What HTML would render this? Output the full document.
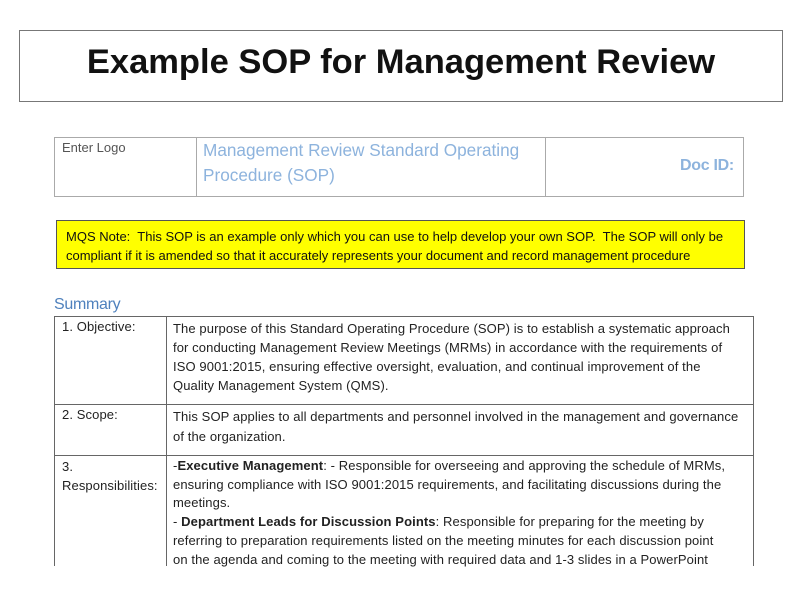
<!DOCTYPE html>
<html><head><meta charset="utf-8"><style>
body{margin:0;width:794px;height:600px;background:#fff;position:relative;overflow:hidden;font-family:"Liberation Sans",sans-serif;}
.a{position:absolute;white-space:nowrap;}
.t{font-size:13px;letter-spacing:0.1px;color:#222;}
.b{position:absolute;border:1px solid #999;}
.l{position:absolute;background:#666;}
</style></head><body>
<div class="b" style="left:19px;top:30px;width:762px;height:70px;border-color:#777"></div>
<div class="a" style="left:19px;width:764px;text-align:center;top:43px;font-size:34.5px;font-weight:bold;letter-spacing:0;color:#111">Example SOP for Management Review</div>

<div class="b" style="left:54px;top:137px;width:688px;height:58px;border-color:#aaa"></div>
<div class="l" style="left:196px;top:137px;width:1px;height:59px;background:#aaa"></div>
<div class="l" style="left:545px;top:137px;width:1px;height:59px;background:#aaa"></div>
<div class="a" style="left:62px;top:140px;font-size:13px;color:#555">Enter Logo</div>
<div class="a" style="left:203px;top:138px;font-size:17.2px;color:#8db3dd;line-height:25px">Management Review Standard Operating<br>Procedure (SOP)</div>
<div class="a" style="left:680px;top:157px;font-size:16px;font-weight:bold;letter-spacing:-0.3px;color:#8db3dd">Doc ID:</div>

<div class="a" style="left:56px;top:220px;width:687px;height:47px;background:#ffff00;border:1px solid #555"></div>
<div class="a t" style="left:66px;top:227px;line-height:19px;color:#111;font-size:13px;letter-spacing:0">MQS Note:&nbsp; This SOP is an example only which you can use to help develop your own SOP.&nbsp; The SOP will only be<br>compliant if it is amended so that it accurately represents your document and record management procedure</div>

<div class="a" style="left:54px;top:296px;font-size:16px;letter-spacing:-0.3px;color:#4f81bd">Summary</div>

<div class="l" style="left:54px;top:316px;width:700px;height:1px"></div>
<div class="l" style="left:54px;top:404px;width:700px;height:1px"></div>
<div class="l" style="left:54px;top:455px;width:700px;height:1px"></div>
<div class="l" style="left:54px;top:316px;width:1px;height:250px"></div>
<div class="l" style="left:166px;top:316px;width:1px;height:250px"></div>
<div class="l" style="left:753px;top:316px;width:1px;height:250px"></div>

<div class="a t" style="left:62px;top:319px">1. Objective:</div>
<div class="a t" style="left:173px;top:319px;line-height:19px">The purpose of this Standard Operating Procedure (SOP) is to establish a systematic approach<br>for conducting Management Review Meetings (MRMs) in accordance with the requirements of<br>ISO 9001:2015, ensuring effective oversight, evaluation, and continual improvement of the<br>Quality Management System (QMS).</div>

<div class="a t" style="left:62px;top:407px">2. Scope:</div>
<div class="a t" style="left:173px;top:407px;line-height:19.5px">This SOP applies to all departments and personnel involved in the management and governance<br>of the organization.</div>

<div class="a t" style="left:62px;top:457px;line-height:19px">3.<br>Responsibilities:</div>
<div class="a t" style="left:173px;top:457px;line-height:18.7px">-<b>Executive Management</b>: - Responsible for overseeing and approving the schedule of MRMs,<br>ensuring compliance with ISO 9001:2015 requirements, and facilitating discussions during the<br>meetings.<br>- <b>Department Leads for Discussion Points</b>: Responsible for preparing for the meeting by<br>referring to preparation requirements listed on the meeting minutes for each discussion point<br>on the agenda and coming to the meeting with required data and 1-3 slides in a PowerPoint</div>
</body></html>
